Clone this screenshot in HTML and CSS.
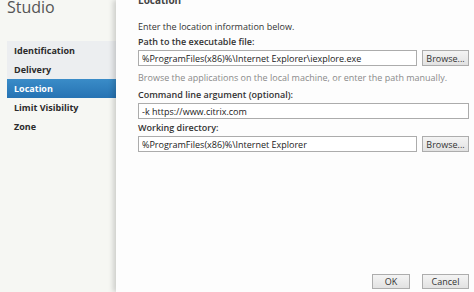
FILE: index.html
```html
<!DOCTYPE html>
<html lang="en">
<head>
    <meta charset="UTF-8">
    <title>Studio - Location</title>
    <link rel="stylesheet" href="styles.css">
</head>
<body>
    <div class="window">
        <div class="sidebar">
            <div class="brand">Studio</div>
            <ul class="steps">
                <li class="step done">Identification</li>
                <li class="step done">Delivery</li>
                <li class="step active">Location</li>
                <li class="step">Limit Visibility</li>
                <li class="step">Zone</li>
            </ul>
        </div>

        <div class="main">
            <h2 class="page-title">Location</h2>
            <p class="intro">Enter the location information below.</p>

            <label class="field-label">Path to the executable file:</label>
            <div class="field-row">
                <input class="text-box" type="text" value="%ProgramFiles(x86)%\Internet Explorer\iexplore.exe">
                <button class="btn">Browse...</button>
            </div>
            <p class="hint">Browse the applications on the local machine, or enter the path manually.</p>

            <label class="field-label">Command line argument (optional):</label>
            <div class="field-row">
                <input class="text-box" type="text" value="-k https://www.citrix.com">
            </div>

            <label class="field-label">Working directory:</label>
            <div class="field-row">
                <input class="text-box" type="text" value="%ProgramFiles(x86)%\Internet Explorer">
                <button class="btn">Browse...</button>
            </div>

            <div class="footer">
                <button class="btn btn-ok">OK</button>
                <button class="btn btn-cancel">Cancel</button>
            </div>
        </div>
    </div>
</body>
</html>
```

FILE: styles.css
```css
body {
    margin: 0;
    padding: 0;
    font-family: 'Open Sans', 'Noto Sans', sans-serif;
    font-size: 9px;
    line-height: 12px;
    color: #333;
    background: #fdfdfd;
}

.window {
    display: flex;
    width: 474px;
    height: 292px;
    overflow: hidden;
}

/* left wizard steps */
.sidebar {
    width: 116px;
    flex-shrink: 0;
    background: #f6f7f3;
}

.brand {
    font-size: 16px;
    line-height: 20px;
    color: #555;
    padding-left: 7px;
    margin-top: -3px;
    height: 44px;
}

.steps {
    list-style: none;
    margin: 0;
    padding: 0;
}

.step {
    position: relative;
    height: 19px;
    line-height: 19px;
    margin-left: 7px;
    padding-left: 7px;
    font-weight: bold;
    color: #2b2b2b;
}

.step.done {
    background: #eceef0;
}

.step.active {
    background: linear-gradient(to bottom, #3a8cc8, #2673b3);
    color: #fff;
}

.step.active::after {
    content: "";
    position: absolute;
    right: -7px;
    top: 0;
    border-top: 9.5px solid transparent;
    border-bottom: 9.5px solid transparent;
    border-left: 7px solid #2d7cba;
}

/* right content */
.main {
    flex: 1;
    display: flex;
    flex-direction: column;
    padding: 0 5px 3px 22px;
    background: #fdfdfd;
    box-shadow: -3px 0 5px rgba(0, 0, 0, 0.16);
    z-index: 1;
}

.page-title {
    margin: -6px 0 0;
    font-size: 10px;
    font-weight: bold;
    color: #444;
    height: 27px;
}

.intro {
    margin: 0 0 3px;
    color: #333;
}

.field-label {
    display: block;
    font-weight: 600;
    color: #333;
    margin-bottom: 2px;
}

.field-row {
    display: flex;
    gap: 5px;
    margin-bottom: 3px;
}

.text-box {
    flex: 1;
    height: 16px;
    padding: 0 3px;
    border: 1px solid #acacac;
    font-family: inherit;
    font-size: 9px;
    color: #222;
    background: #fff;
    box-sizing: border-box;
}

.btn {
    font-family: inherit;
    font-size: 9px;
    color: #333;
    border: 1px solid #adadad;
    background: linear-gradient(to bottom, #f4f4f4, #e2e2e2);
    height: 16px;
    padding: 0;
    width: 47px;
}

.hint {
    margin: 3px 0 5px;
    color: #8a8a8a;
}

.footer {
    margin-top: auto;
    display: flex;
    justify-content: flex-end;
    gap: 12px;
}

.btn-ok {
    width: 38px;
    height: 15px;
}

.btn-cancel {
    width: 47px;
    height: 15px;
}
```
